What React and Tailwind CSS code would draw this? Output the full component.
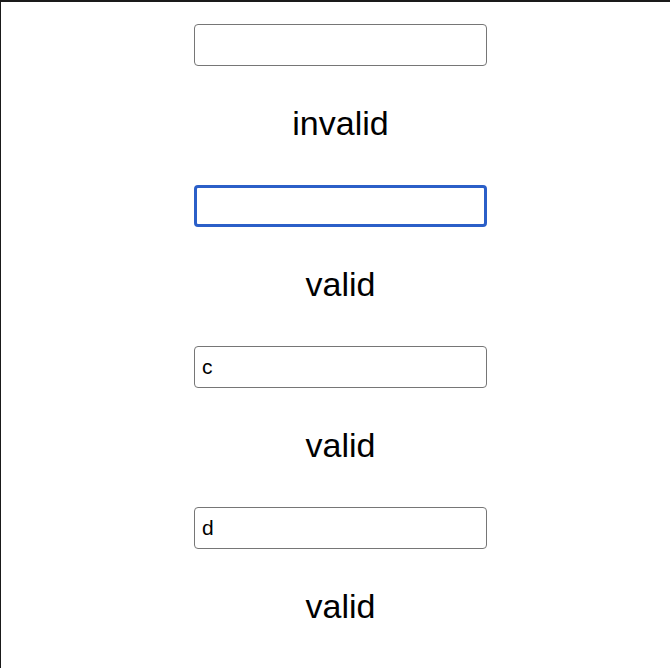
const fields = [
  { value: '', status: 'invalid', focused: false },
  { value: '', status: 'valid', focused: true },
  { value: 'c', status: 'valid', focused: false },
  { value: 'd', status: 'valid', focused: false },
]

export default function App() {
  return (
    <div
      className="h-[668px] w-[670px] overflow-hidden border-l border-t-2 border-[#1a1a1a] bg-white text-black"
      style={{ fontFamily: '"Liberation Sans", Arial, sans-serif' }}
    >
      <div className="flex flex-col items-center pl-[10px] pt-[22px]">
        {fields.map((f, i) => (
          <div key={i} className="flex flex-col items-center">
            <input
              readOnly
              value={f.value}
              className={
                f.focused
                  ? 'h-[42px] w-[293px] rounded-[4px] border-[3px] border-[#2b5fc8] px-[6px] text-[21px] outline-none'
                  : 'h-[42px] w-[293px] rounded-[4px] border border-[#767676] px-[7px] text-[21px] outline-none'
              }
            />
            <div className="pb-[43px] pt-[38px] text-[34px] leading-[38px]">{f.status}</div>
          </div>
        ))}
      </div>
    </div>
  )
}
